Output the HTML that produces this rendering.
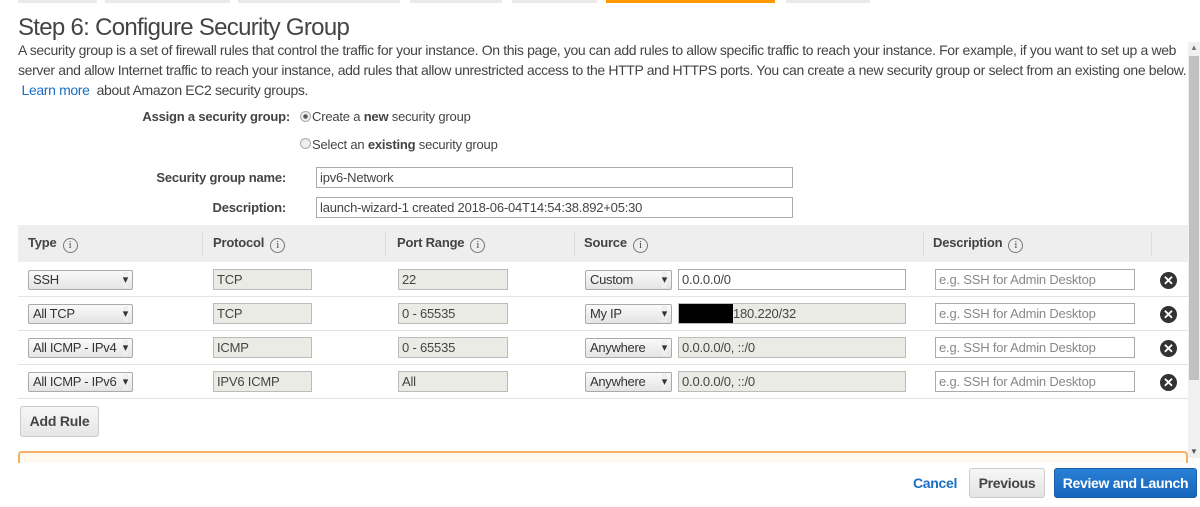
<!DOCTYPE html>
<html><head><style>
*{box-sizing:border-box;margin:0;padding:0}
body{width:1200px;height:507px;overflow:hidden;background:#fff;font-family:"Liberation Sans",sans-serif;color:#444;position:relative;font-size:14px}
.a{position:absolute}
.bar{position:absolute;top:0;height:3px;background:#eaeaea}
h1{position:absolute;left:18px;top:14px;font-size:24px;font-weight:normal;color:#444;letter-spacing:-0.7px}
.p{position:absolute;left:18px;top:40px;width:1172px;font-size:14px;line-height:20px;color:#444;letter-spacing:-0.36px;white-space:nowrap}
.lbl{position:absolute;font-weight:bold;font-size:13px;text-align:right;color:#444;letter-spacing:-0.2px}
.inp{position:absolute;border:1px solid #aaa;background:#fff;font-size:13px;padding:1px 3px;height:21px;line-height:17px;color:#444;white-space:nowrap;overflow:hidden;letter-spacing:-0.2px}
.ro{background:#ebebe6;border-color:#bbb}
.sel{position:absolute;height:20px;border:1px solid #aaa;border-radius:2px;background:linear-gradient(#fafafa,#e4e4e4);font-size:13px;padding:1px 14px 1px 4px;line-height:16px;color:#333;white-space:nowrap;overflow:hidden;letter-spacing:-0.3px}
.sel:after{content:"▾";position:absolute;right:4px;top:1px;font-size:11px;background:#eee}
.ph{color:#888}
.th{position:absolute;top:235px;font-weight:bold;font-size:13px;color:#444;letter-spacing:-0.2px}
.i{display:inline-block;width:15px;height:15px;border:1px solid #777;border-radius:50%;font-size:10px;text-align:center;line-height:13px;font-weight:normal;margin-left:6px;vertical-align:-1px;font-family:"Liberation Serif",serif}
.sep{position:absolute;top:232px;width:1px;height:24px;background:#ddd}
.hr{position:absolute;left:18px;width:1170px;height:1px;background:#e3e3e3}
.x{position:absolute;width:17px;height:17px;border-radius:50%;background:#333;color:#fff;font-size:13px;font-weight:bold;text-align:center;line-height:17px}
.radio{position:absolute;width:11px;height:11px;border:1px solid #aaa;border-radius:50%;background:#eee}
</style></head><body>
<div class="bar" style="left:18px;width:79px"></div>
<div class="bar" style="left:105px;width:125px"></div>
<div class="bar" style="left:238px;width:162px"></div>
<div class="bar" style="left:410px;width:92px"></div>
<div class="bar" style="left:512px;width:85px"></div>
<div class="bar" style="left:606px;width:169px;background:#f90"></div>
<div class="bar" style="left:786px;width:84px"></div>
<h1>Step 6: Configure Security Group</h1>
<div class="p">A security group is a set of firewall rules that control the traffic for your instance. On this page, you can add rules to allow specific traffic to reach your instance. For example, if you want to set up a web<br>server and allow Internet traffic to reach your instance, add rules that allow unrestricted access to the HTTP and HTTPS ports. You can create a new security group or select from an existing one below.<br>&nbsp;<span style="color:#1a6fc4">Learn more</span>&nbsp; about Amazon EC2 security groups.</div>
<div class="lbl" style="left:100px;width:190px;top:109px">Assign a security group:</div>
<div class="radio" style="left:300px;top:111px;background:radial-gradient(#555 30%,#eee 40%)"></div>
<div class="a" style="left:312px;top:109px;font-size:13px;letter-spacing:-0.2px">Create a <b>new</b> security group</div>
<div class="radio" style="left:300px;top:138px"></div>
<div class="a" style="left:312px;top:137px;font-size:13px;letter-spacing:-0.2px">Select an <b>existing</b> security group</div>
<div class="lbl" style="left:100px;width:186px;top:170px">Security group name:</div>
<div class="inp" style="left:316px;top:167px;width:477px">ipv6-Network</div>
<div class="lbl" style="left:100px;width:186px;top:200px">Description:</div>
<div class="inp" style="left:316px;top:197px;width:477px">launch-wizard-1 created 2018-06-04T14:54:38.892+05:30</div>

<div class="a" style="left:18px;top:225px;width:1170px;height:37px;background:#eee"></div>
<div class="th" style="left:28px">Type<span class="i">i</span></div>
<div class="sep" style="left:202px"></div>
<div class="th" style="left:213px">Protocol<span class="i">i</span></div>
<div class="sep" style="left:385px"></div>
<div class="th" style="left:397px">Port Range<span class="i">i</span></div>
<div class="sep" style="left:574px"></div>
<div class="th" style="left:584px">Source<span class="i">i</span></div>
<div class="sep" style="left:923px"></div>
<div class="th" style="left:933px">Description<span class="i">i</span></div>
<div class="sep" style="left:1151px"></div>

<div class="hr" style="top:296px"></div>
<div class="hr" style="top:330px"></div>
<div class="hr" style="top:364px"></div>
<div class="hr" style="top:398px"></div>

<div class="sel" style="left:28px;top:270px;width:105px">SSH</div>
<div class="inp ro" style="left:213px;top:269px;width:99px">TCP</div>
<div class="inp ro" style="left:398px;top:269px;width:110px">22</div>
<div class="sel" style="left:585px;top:270px;width:87px">Custom</div>
<div class="inp" style="left:678px;top:269px;width:228px">0.0.0.0/0</div>
<div class="inp ph" style="left:935px;top:269px;width:200px">e.g. SSH for Admin Desktop</div>
<div class="x" style="left:1160px;top:272px">✕</div>

<div class="sel" style="left:28px;top:304px;width:105px">All TCP</div>
<div class="inp ro" style="left:213px;top:303px;width:99px">TCP</div>
<div class="inp ro" style="left:398px;top:303px;width:110px">0 - 65535</div>
<div class="sel" style="left:585px;top:304px;width:87px">My IP</div>
<div class="inp ro" style="left:678px;top:303px;width:228px;padding-left:0"><span style="display:inline-block;width:54px;height:19px;background:#000;vertical-align:top;margin-top:-1px"></span>180.220/32</div>
<div class="inp ph" style="left:935px;top:303px;width:200px">e.g. SSH for Admin Desktop</div>
<div class="x" style="left:1160px;top:306px">✕</div>

<div class="sel" style="left:28px;top:338px;width:105px">All ICMP - IPv4</div>
<div class="inp ro" style="left:213px;top:337px;width:99px">ICMP</div>
<div class="inp ro" style="left:398px;top:337px;width:110px">0 - 65535</div>
<div class="sel" style="left:585px;top:338px;width:87px">Anywhere</div>
<div class="inp ro" style="left:678px;top:337px;width:228px">0.0.0.0/0, ::/0</div>
<div class="inp ph" style="left:935px;top:337px;width:200px">e.g. SSH for Admin Desktop</div>
<div class="x" style="left:1160px;top:340px">✕</div>

<div class="sel" style="left:28px;top:372px;width:105px">All ICMP - IPv6</div>
<div class="inp ro" style="left:213px;top:371px;width:99px">IPV6 ICMP</div>
<div class="inp ro" style="left:398px;top:371px;width:110px">All</div>
<div class="sel" style="left:585px;top:372px;width:87px">Anywhere</div>
<div class="inp ro" style="left:678px;top:371px;width:228px">0.0.0.0/0, ::/0</div>
<div class="inp ph" style="left:935px;top:371px;width:200px">e.g. SSH for Admin Desktop</div>
<div class="x" style="left:1160px;top:374px">✕</div>

<div class="a" style="left:20px;top:406px;width:79px;height:31px;border:1px solid #ccc;border-radius:3px;background:linear-gradient(#f6f6f6,#e6e6e6);font-weight:bold;font-size:14px;text-align:center;line-height:29px;color:#444;letter-spacing:-0.2px">Add Rule</div>
<div class="a" style="left:18px;top:451px;width:1170px;height:12px;border:2px solid #f3b066;border-bottom:none;border-radius:4px 4px 0 0;background:#fffaf0"></div>

<div class="a" style="left:1188px;top:42px;width:12px;height:416px;background:#f0f0f0"></div>
<div class="a" style="left:1189px;top:56px;width:10px;height:324px;background:#c1c1c1"></div>
<div class="a" style="left:1190px;top:43px;font-size:8px;color:#777">▲</div>
<div class="a" style="left:1190px;top:447px;font-size:8px;color:#555">▼</div>

<div class="a" style="left:913px;top:475px;font-weight:bold;color:#1a6fc4;font-size:14px;letter-spacing:-0.3px">Cancel</div>
<div class="a" style="left:969px;top:468px;width:76px;height:30px;border:1px solid #ccc;border-radius:3px;background:linear-gradient(#f6f6f6,#e4e4e4);font-weight:bold;text-align:center;line-height:28px;color:#444;letter-spacing:-0.3px">Previous</div>
<div class="a" style="left:1054px;top:468px;width:143px;height:30px;border:1px solid #1a5fa8;border-radius:3px;background:linear-gradient(#2a80d6,#1565bd);font-weight:bold;text-align:center;line-height:28px;color:#fff;letter-spacing:-0.3px">Review and Launch</div>
</body></html>
